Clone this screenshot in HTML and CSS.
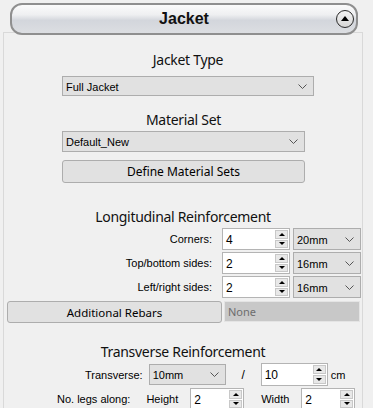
FILE: index.html
```html
<!DOCTYPE html>
<html lang="en">
<head>
  <meta charset="UTF-8">
  <title>Jacket</title>
  <link rel="stylesheet" href="styles.css">
</head>
<body>

  <div class="header">
    <div class="header-title">Jacket</div>
    <div class="collapse"><span class="tri-up big"></span></div>
  </div>

  <div class="panel">
    <div class="group group-type">
      <div class="title">Jacket Type</div>
      <div class="combo combo-type">
        <span>Full Jacket</span>
        <svg class="chev" width="9" height="5" viewBox="0 0 9 5"><polyline points="0.5,0.5 4.5,4.5 8.5,0.5" fill="none" stroke="#555" stroke-width="1"/></svg>
      </div>
    </div>

    <div class="group group-mat">
      <div class="title title-mat">Material Set</div>
      <div class="combo combo-mat">
        <span>Default_New</span>
        <svg class="chev" width="9" height="5" viewBox="0 0 9 5"><polyline points="0.5,0.5 4.5,4.5 8.5,0.5" fill="none" stroke="#555" stroke-width="1"/></svg>
      </div>
      <button class="btn btn-define">Define Material Sets</button>
    </div>

    <div class="title title-long">Longitudinal Reinforcement</div>
    <div class="long-grid">
      <div class="lbl">Corners:</div>
      <div class="spin"><span class="spin-val">4</span><span class="spin-btns"><span class="sb"><span class="tri-up"></span></span><span class="sb"><span class="tri-down"></span></span></span></div>
      <div class="combo combo-bar"><span>20mm</span><svg class="chev" width="9" height="5" viewBox="0 0 9 5"><polyline points="0.5,0.5 4.5,4.5 8.5,0.5" fill="none" stroke="#555" stroke-width="1"/></svg></div>

      <div class="lbl">Top/bottom sides:</div>
      <div class="spin"><span class="spin-val">2</span><span class="spin-btns"><span class="sb"><span class="tri-up"></span></span><span class="sb"><span class="tri-down"></span></span></span></div>
      <div class="combo combo-bar"><span>16mm</span><svg class="chev" width="9" height="5" viewBox="0 0 9 5"><polyline points="0.5,0.5 4.5,4.5 8.5,0.5" fill="none" stroke="#555" stroke-width="1"/></svg></div>

      <div class="lbl">Left/right sides:</div>
      <div class="spin"><span class="spin-val">2</span><span class="spin-btns"><span class="sb"><span class="tri-up"></span></span><span class="sb"><span class="tri-down"></span></span></span></div>
      <div class="combo combo-bar"><span>16mm</span><svg class="chev" width="9" height="5" viewBox="0 0 9 5"><polyline points="0.5,0.5 4.5,4.5 8.5,0.5" fill="none" stroke="#555" stroke-width="1"/></svg></div>
    </div>

    <div class="rebar-row">
      <button class="btn btn-rebars">Additional Rebars</button>
      <div class="none-field">None</div>
    </div>

    <div class="title title-trans">Transverse Reinforcement</div>
    <div class="trans-row">
      <div class="lbl lbl-trans">Transverse:</div>
      <div class="combo combo-trans"><span>10mm</span><svg class="chev" width="9" height="5" viewBox="0 0 9 5"><polyline points="0.5,0.5 4.5,4.5 8.5,0.5" fill="none" stroke="#555" stroke-width="1"/></svg></div>
      <div class="slash">/</div>
      <div class="spin spin-spacing"><span class="spin-val">10</span><span class="spin-btns"><span class="sb"><span class="tri-up"></span></span><span class="sb"><span class="tri-down"></span></span></span></div>
      <div class="unit">cm</div>
    </div>
    <div class="legs-row">
      <div class="lbl lbl-legs">No. legs along:</div>
      <div class="lbl lbl-h">Height</div>
      <div class="spin spin-leg"><span class="spin-val">2</span><span class="spin-btns"><span class="sb"><span class="tri-up"></span></span><span class="sb"><span class="tri-down"></span></span></span></div>
      <div class="lbl lbl-w">Width</div>
      <div class="spin spin-leg"><span class="spin-val">2</span><span class="spin-btns"><span class="sb"><span class="tri-up"></span></span><span class="sb"><span class="tri-down"></span></span></span></div>
    </div>
  </div>

</body>
</html>
```

FILE: styles.css
```css
body {
  margin: 0;
  width: 373px;
  height: 408px;
  overflow: hidden;
  background: #f0f0f0;
  font-family: "Liberation Sans", Arial, sans-serif;
  font-size: 11px;
  color: #000;
}

/* collapsible header */
.header {
  position: relative;
  z-index: 1;
  margin: 3px 15px 0 10px;
  height: 32px;
  box-sizing: border-box;
  border: 2px solid #8f8f8f;
  border-radius: 12px;
  background: linear-gradient(to bottom, #fbfbfb 0%, #eeeff1 35%, #d3d6dc 55%, #dcdee2 100%);
  display: grid;
  grid-template-columns: 1fr auto 1fr;
  align-items: center;
}
.header-title {
  grid-column: 2;
  font-weight: bold;
  font-size: 16px;
  color: #111;
}
.collapse {
  grid-column: 3;
  justify-self: end;
  margin-right: 2px;
  width: 18px;
  height: 18px;
  box-sizing: border-box;
  border: 1.5px solid #2a2a2a;
  border-radius: 50%;
  background: linear-gradient(to bottom, #f4f4f4, #d6d6d6);
  display: flex;
  align-items: center;
  justify-content: center;
}

.tri-up, .tri-down {
  width: 0;
  height: 0;
  border-left: 3px solid transparent;
  border-right: 3px solid transparent;
}
.tri-up { border-bottom: 3px solid #000; }
.tri-down { border-top: 3px solid #000; }
.tri-up.big {
  border-left-width: 4px;
  border-right-width: 4px;
  border-bottom-width: 5px;
  margin-top: -1px;
}

/* main panel */
.panel {
  margin: -3px 10px 0 3px;
  height: 390px;
  box-sizing: border-box;
  border: 1px solid #d9d9d9;
  padding-top: 17px;
}

.title {
  font-family: "Noto Sans", sans-serif;
  font-size: 14px;
  letter-spacing: -0.3px;
  line-height: 20px;
  text-align: center;
  color: #111;
}

.group { margin-left: 58px; }
.group-type { width: 252px; }
.group-mat { width: 243px; margin-top: 14px; }

.combo {
  display: flex;
  align-items: center;
  justify-content: space-between;
  box-sizing: border-box;
  height: 20px;
  border: 1px solid #adadad;
  background: #e1e1e1;
  padding: 0 6px 0 3px;
}
.combo span { padding-top: 1px; }
.combo-type { margin-top: 6px; }
.combo-mat { margin-top: 1px; height: 21px; }

.btn {
  display: block;
  box-sizing: border-box;
  border: 1px solid #adadad;
  border-radius: 3px;
  background: #e1e1e1;
  font-family: "Noto Sans", sans-serif;
  font-size: 12px;
  color: #000;
  padding: 0;
}
.btn-define {
  width: 100%;
  height: 23px;
  margin-top: 8px;
}

.title-long { margin-top: 24px; }

.long-grid {
  display: grid;
  grid-template-columns: 215px 68px 68px;
  column-gap: 3px;
  row-gap: 2px;
  margin-top: 1px;
  align-items: center;
}
.long-grid .lbl {
  text-align: right;
  margin-right: 7px;
}

.spin {
  display: flex;
  box-sizing: border-box;
  height: 22px;
  border: 1px solid #b4b4b4;
  background: #fff;
}
.spin-val {
  flex: 1;
  padding: 4px 0 0 3px;
  font-size: 12px;
  font-family: "Liberation Sans", Arial, sans-serif;
}
.spin-btns {
  display: flex;
  flex-direction: column;
  width: 13px;
  margin: 1px 1px 1px 0;
  gap: 1px;
}
.sb {
  flex: 1;
  background: #e8e8e8;
  border: 1px solid #c8c8c8;
  display: flex;
  align-items: center;
  justify-content: center;
}
.combo-bar { height: 22px; }

.rebar-row {
  display: flex;
  gap: 2px;
  margin: 3px 0 0 3px;
}
.btn-rebars {
  width: 215px;
  height: 22px;
  font-size: 11.5px;
}
.none-field {
  width: 136px;
  height: 21px;
  box-sizing: border-box;
  border: 1px solid #e4e4e4;
  background: #c8c8c8;
  color: #6d6d6d;
  font-family: "Noto Sans", sans-serif;
  font-size: 11px;
  line-height: 19px;
  padding-left: 3px;
}

.title-trans { margin-top: 19px; }

.trans-row {
  display: flex;
  align-items: center;
  margin-top: 1px;
  height: 23px;
}
.lbl-trans { margin-left: 81px; }
.combo-trans {
  width: 77px;
  height: 21px;
  margin-left: 6px;
}
.slash {
  width: 35px;
  text-align: center;
  font-size: 12px;
}
.spin-spacing { width: 67px; height: 23px; }
.unit { margin-left: 3px; font-size: 11px; }

.legs-row {
  display: flex;
  align-items: center;
  margin-top: 2px;
  height: 22px;
}
.lbl-legs { margin-left: 53px; }
.lbl-h { margin-left: 16px; }
.spin-leg { width: 54px; margin-left: 12px; }
.lbl-w { margin-left: 17px; }
```
